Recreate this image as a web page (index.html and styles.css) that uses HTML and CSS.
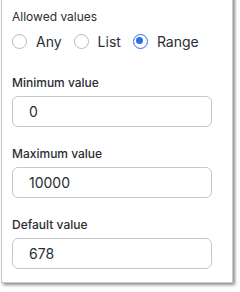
FILE: index.html
```html
<!DOCTYPE html>
<html>
<head>
<meta charset="utf-8">
<link rel="stylesheet" href="styles.css">
</head>
<body>
<div class="card">
  <div class="group-label">Allowed values</div>
  <div class="radios">
    <label class="radio"><span class="circle"></span><span class="rlabel">Any</span></label>
    <label class="radio"><span class="circle"></span><span class="rlabel">List</span></label>
    <label class="radio"><span class="circle checked"></span><span class="rlabel">Range</span></label>
  </div>
  <div class="field first">
    <div class="flabel">Minimum value</div>
    <div class="input">0</div>
  </div>
  <div class="field">
    <div class="flabel">Maximum value</div>
    <div class="input">10000</div>
  </div>
  <div class="field">
    <div class="flabel">Default value</div>
    <div class="input">678</div>
  </div>
</div>
</body>
</html>
```
FILE: styles.css
```css
html, body {
  margin: 0;
  padding: 0;
  background: #ffffff;
}
body {
  width: 240px;
  height: 292px;
  overflow: hidden;
  font-family: Inter, "Liberation Sans", sans-serif;
  color: #2a2d33;
}
.card {
  margin-left: 1px;
  margin-top: -4px;
  width: 220px;
  height: 276px;
  padding: 10px 0 0 10px;
  background: #fff;
  border: 1px solid #c9c9c9;
  border-top: none;
  box-shadow: 2px 2px 3px rgba(0,0,0,0.45);
}
.group-label {
  font-size: 12px;
  line-height: 16px;
  margin-top: 3px;
}
.radios {
  display: flex;
  align-items: center;
  margin-top: 7px;
  height: 18px;
}
.radio {
  display: flex;
  align-items: center;
  margin-right: 12px;
}
.circle {
  width: 15px;
  height: 15px;
  border: 1px solid #b4b8bf;
  border-radius: 50%;
  box-sizing: border-box;
  margin-right: 9px;
  background: #fff;
  position: relative;
}
.circle.checked {
  border: 1.5px solid #2a6fe8;
}
.circle.checked::after {
  content: "";
  position: absolute;
  left: 2.5px;
  top: 2.5px;
  width: 7px;
  height: 7px;
  border-radius: 50%;
  background: #2a6fe8;
}
.rlabel {
  font-size: 14px;
}
.field {
  margin-top: 19px;
}
.field.first {
  margin-top: 25px;
}
.flabel {
  font-size: 12px;
  font-weight: 500;
  line-height: 16px;
}
.input {
  margin-top: 5px;
  width: 200px;
  height: 31px;
  box-sizing: border-box;
  border: 1px solid #c5c8ce;
  border-radius: 6px;
  padding-left: 16px;
  font-size: 14px;
  line-height: 29px;
}
```
